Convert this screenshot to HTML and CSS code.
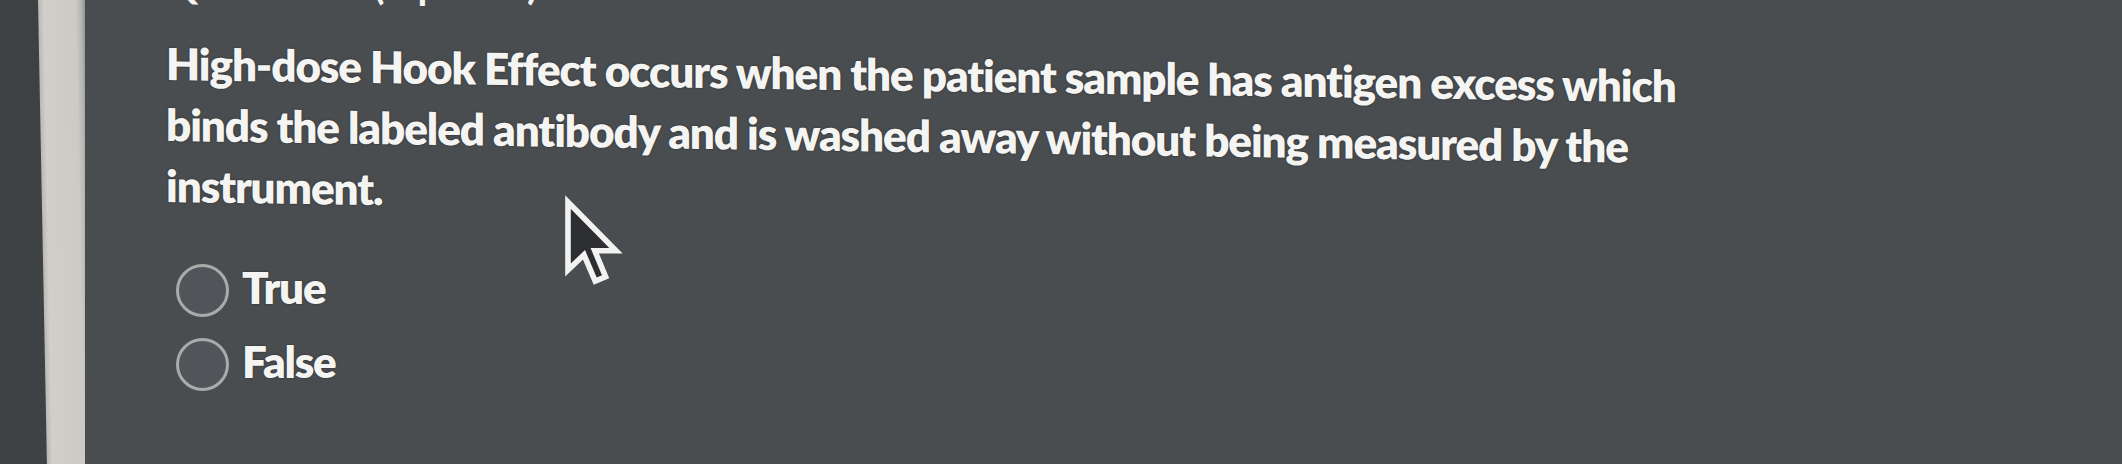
FILE: index.html
```html
<!DOCTYPE html>
<html lang="en">
<head>
    <meta charset="UTF-8">
    <meta name="viewport" content="width=device-width, initial-scale=1.0">
    <title>Question 4</title>
    <link rel="stylesheet" href="styles.css">
</head>
<body>
    <div class="screen">
        <div class="edge"></div>
        <div class="rail"></div>

        <div class="content">
            <div class="q-header">Question 4 (1 points)</div>

            <p class="q-text">High-dose Hook Effect occurs when the patient sample has antigen excess which binds the labeled antibody and is washed away without being measured by the instrument.</p>

            <div class="options">
                <label class="option">
                    <span class="radio"></span>
                    <span class="option-label">True</span>
                </label>
                <label class="option">
                    <span class="radio"></span>
                    <span class="option-label">False</span>
                </label>
            </div>

            <!-- mouse pointer -->
            <svg class="pointer" viewBox="-2 -2 17 25" width="68" height="100">
                <path d="M0 0 L0 17 L4 13.2 L6.8 19.8 L9.4 18.7 L6.7 12.2 L12 12.2 Z" fill="#2c2e31" stroke="#f2f2f0" stroke-width="1.4" stroke-linejoin="miter"/>
            </svg>
        </div>
    </div>
</body>
</html>
```

FILE: styles.css
```css
html, body {
    margin: 0;
    height: 100%;
}
body {
    font-family: Lato, "Open Sans", sans-serif;
    background-color: #3e4245;
    overflow: hidden;
}
.screen {
    display: flex;
    height: 464px;
}
.edge {
    width: 38px;
    background-color: #3d4144;
}
.rail {
    width: 47px;
    background: linear-gradient(90deg, #b9b7b3 0, #d2cfcb 12%, #cdcac6 80%, #b3b3b1 92%, #8e9193 100%);
    transform: skewX(1.1deg);
    transform-origin: 0 0;
}
.content {
    position: relative;
    flex: 1;
    padding-left: 81px;
    background-color: #4a4d50;
    color: #f4f4f2;
}
.q-header {
    margin-top: -43px;
    font-size: 40px;
    font-weight: 700;
    line-height: 54px;
}
.q-text {
    margin: 22px 0 0;
    max-width: 1580px;
    font-size: 44px;
    font-weight: 800;
    line-height: 61px;
    letter-spacing: -1.1px;
    text-shadow: 0 0 2px rgba(20, 20, 20, 0.7);
    transform: skewY(0.85deg);
    transform-origin: 0 0;
}
.options {
    margin-top: 37px;
}
.option {
    display: flex;
    align-items: center;
    height: 74px;
    gap: 13px;
}
.radio {
    width: 47px;
    height: 47px;
    margin-left: 10px;
    border: 3px solid #a9abab;
    border-radius: 50%;
    background-color: #51555a;
}
.option-label {
    margin-top: -6px;
    font-size: 44px;
    font-weight: 800;
    letter-spacing: -1.2px;
    text-shadow: 0 0 2px rgba(20, 20, 20, 0.7);
}
.pointer {
    position: absolute;
    left: 475px;
    top: 194px;
}
```
